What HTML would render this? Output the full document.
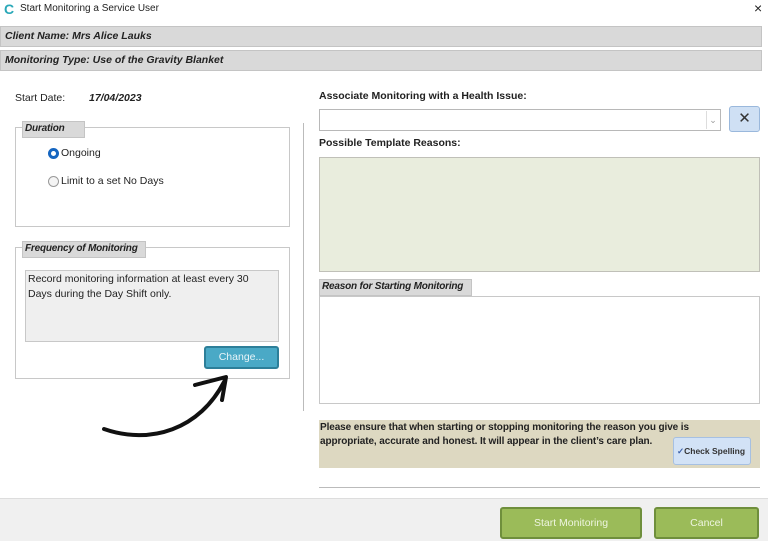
<!DOCTYPE html>
<html><head><meta charset="utf-8"><style>
body{margin:0;width:768px;height:541px;position:relative;background:#fff;font-family:"Liberation Sans",sans-serif;font-size:10.5px;color:#222;overflow:hidden;letter-spacing:0px}
div,span{position:absolute;box-sizing:border-box;white-space:nowrap}
.bar{left:0;width:762px;height:21px;background:#d9d9d9;border:1px solid #c4c4c4;font-weight:bold;font-style:italic;padding:3px 4px;font-size:10.5px}
.grp{border:1px solid #c8c8c8}
.leg{background:#d9d9d9;border:1px solid #c4c4c4;font-weight:bold;font-style:italic;padding:1px 2px;font-size:10px;letter-spacing:-0.2px}
.b{font-weight:bold}
</style></head><body>
<div style="left:0;top:0;width:768px;height:20px;background:#fff"></div>
<div style="left:4px;top:1px;font-size:14px;font-weight:bold;color:#2aa8b8">C</div>
<div style="left:20px;top:3px;font-size:10px">Start Monitoring a Service User</div>
<div style="left:754px;top:0px;font-size:14px">×</div>
<div class="bar" style="top:26px">Client Name: Mrs Alice Lauks</div>
<div class="bar" style="top:50px">Monitoring Type: Use of the Gravity Blanket</div>
<div style="left:15px;top:92px">Start Date:</div>
<div style="left:89px;top:92px;font-weight:bold;font-style:italic">17/04/2023</div>
<div class="grp" style="left:15px;top:127px;width:275px;height:100px"></div>
<div class="leg" style="left:22px;top:121px;width:63px;height:17px">Duration</div>
<div style="left:48px;top:148px;width:11px;height:11px;border-radius:50%;background:#fff;border:3px solid #1565c0"></div>
<div style="left:61px;top:147px">Ongoing</div>
<div style="left:48px;top:176px;width:11px;height:11px;border-radius:50%;border:1px solid #999;background:#f4f4f4"></div>
<div style="left:61px;top:175px">Limit to a set No Days</div>
<div class="grp" style="left:15px;top:247px;width:275px;height:132px"></div>
<div class="leg" style="left:22px;top:241px;width:124px;height:17px">Frequency of Monitoring</div>
<div style="left:25px;top:270px;width:254px;height:72px;background:#efefef;border:1px solid #c8c8c8;padding:1px 2px;line-height:15px">Record monitoring information at least every 30<br>Days during the Day Shift only.</div>
<div style="left:204px;top:346px;width:75px;height:23px;background:#4aa9c6;border:2px solid #2d7f99;border-radius:3px;color:#e8f4f8;text-align:center;line-height:19px">Change...</div>
<svg style="position:absolute;left:0;top:0" width="768" height="541"><path d="M104 429 C150 445 200 430 225 380" stroke="#111" stroke-width="4" fill="none" stroke-linecap="round"/><path d="M195 385 L226 377 L222 400" stroke="#111" stroke-width="4" fill="none" stroke-linecap="round" stroke-linejoin="round"/></svg>
<div style="left:303px;top:123px;width:1px;height:288px;background:#bbb"></div>
<div class="b" style="left:319px;top:90px">Associate Monitoring with a Health Issue:</div>
<div style="left:319px;top:109px;width:402px;height:22px;border:1px solid #b8b8b8;background:#fff"></div>
<div style="left:706px;top:111px;width:13px;height:18px;border-left:1px solid #ddd;color:#999;font-size:9px;text-align:center;line-height:18px">⌄</div>
<div style="left:729px;top:106px;width:31px;height:26px;background:#cfe0f4;border:1px solid #9ab8dc;border-radius:3px;text-align:center;font-size:15px;line-height:23px;color:#333">✕</div>
<div class="b" style="left:319px;top:137px">Possible Template Reasons:</div>
<div style="left:319px;top:157px;width:441px;height:115px;background:#e9eddd;border:1px solid #c0c0b8"></div>
<div class="leg" style="left:319px;top:279px;width:153px;height:17px">Reason for Starting Monitoring</div>
<div style="left:319px;top:296px;width:441px;height:108px;border:1px solid #c8c8c8;background:#fff"></div>
<div style="left:319px;top:420px;width:441px;height:48px;background:#ddd8c1"></div>
<div class="b" style="left:320px;top:421px;line-height:14px;font-size:10px;letter-spacing:-0.1px">Please ensure that when starting or stopping monitoring the reason you give is<br>appropriate, accurate and honest. It will appear in the client’s care plan.</div>
<div style="left:673px;top:437px;width:78px;height:28px;background:#d2e2f6;border:1px solid #a6c0e2;border-radius:3px;font-size:8.5px;font-weight:bold;line-height:26px;padding-left:3px;color:#333"><span style="position:static;color:#3a5fa8">✓</span>Check Spelling</div>
<div style="left:319px;top:487px;width:441px;height:1px;background:#bbb"></div>
<div style="left:0;top:498px;width:768px;height:43px;background:#f0f0f0;border-top:1px solid #ddd"></div>
<div style="left:500px;top:507px;width:142px;height:32px;background:#9bbb59;border:2px solid #6f8f3c;border-radius:3px;color:#eef5e0;text-align:center;line-height:28px">Start Monitoring</div>
<div style="left:654px;top:507px;width:105px;height:32px;background:#9bbb59;border:2px solid #6f8f3c;border-radius:3px;color:#eef5e0;text-align:center;line-height:28px">Cancel</div>
</body></html>
